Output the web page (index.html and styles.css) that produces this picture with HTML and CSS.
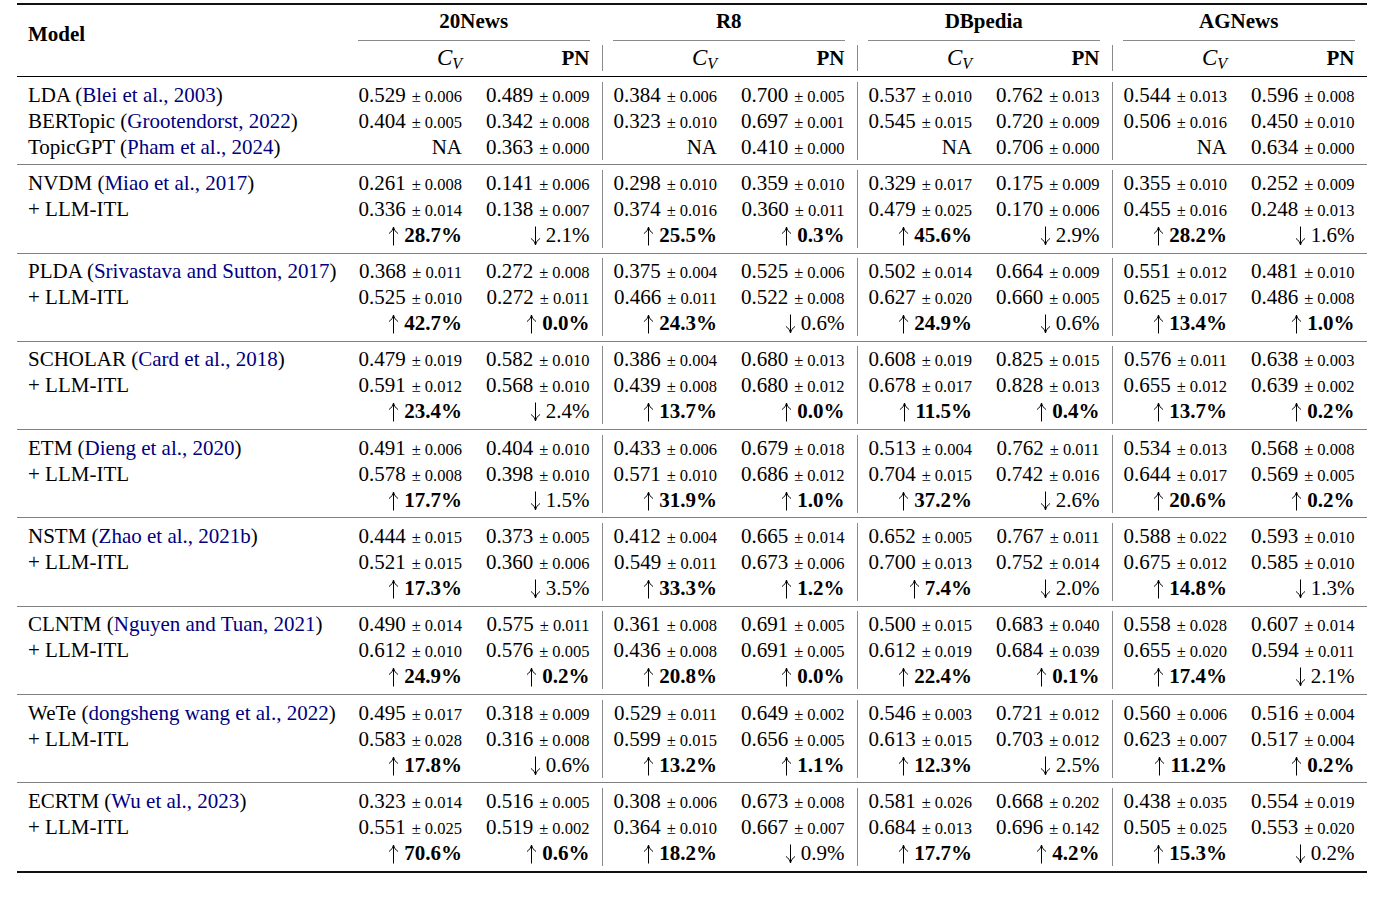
FILE: index.html
```html
<!DOCTYPE html>
<html lang="en">
<head>
<meta charset="utf-8">
<title>Results table</title>
<link rel="stylesheet" href="styles.css">
</head>
<body>
<svg width="0" height="0" class="defs" aria-hidden="true">
  <defs>
    <symbol id="up" viewBox="0 0 11 20"><path d="M5.5 19.5V1.5M1 7.5C3.2 6 4.8 4 5.5 1C6.2 4 7.8 6 10 7.5" fill="none" stroke="#000" stroke-width="1"/></symbol>
    <symbol id="down" viewBox="0 0 11 20"><path d="M5.5 0.5V18.5M1 12.5C3.2 14 4.8 16 5.5 19C6.2 16 7.8 14 10 12.5" fill="none" stroke="#000" stroke-width="1"/></symbol>
  </defs>
</svg>
<div class="table">
  <div class="head">
    <div class="model-h">Model</div>
    <div class="ds">20News</div>
    <div class="ds">R8</div>
    <div class="ds">DBpedia</div>
    <div class="ds">AGNews</div>
    <div class="sub"><i>C</i><sub><i>V</i></sub></div>
    <div class="sub">PN</div>
    <div class="sub s"><i>C</i><sub><i>V</i></sub></div>
    <div class="sub">PN</div>
    <div class="sub s"><i>C</i><sub><i>V</i></sub></div>
    <div class="sub">PN</div>
    <div class="sub s"><i>C</i><sub><i>V</i></sub></div>
    <div class="sub">PN</div>
  </div>

  <div class="group">
    <div class="m">LDA (<a>Blei et al., 2003</a>)</div>
    <div class="c">0.529<small>± 0.006</small></div><div class="c">0.489<small>± 0.009</small></div>
    <div class="c s">0.384<small>± 0.006</small></div><div class="c">0.700<small>± 0.005</small></div>
    <div class="c s">0.537<small>± 0.010</small></div><div class="c">0.762<small>± 0.013</small></div>
    <div class="c s">0.544<small>± 0.013</small></div><div class="c">0.596<small>± 0.008</small></div>
    <div class="m">BERTopic (<a>Grootendorst, 2022</a>)</div>
    <div class="c">0.404<small>± 0.005</small></div><div class="c">0.342<small>± 0.008</small></div>
    <div class="c s">0.323<small>± 0.010</small></div><div class="c">0.697<small>± 0.001</small></div>
    <div class="c s">0.545<small>± 0.015</small></div><div class="c">0.720<small>± 0.009</small></div>
    <div class="c s">0.506<small>± 0.016</small></div><div class="c">0.450<small>± 0.010</small></div>
    <div class="m">TopicGPT (<a>Pham et al., 2024</a>)</div>
    <div class="c">NA</div><div class="c">0.363<small>± 0.000</small></div>
    <div class="c s">NA</div><div class="c">0.410<small>± 0.000</small></div>
    <div class="c s">NA</div><div class="c">0.706<small>± 0.000</small></div>
    <div class="c s">NA</div><div class="c">0.634<small>± 0.000</small></div>
  </div>

  <div class="group">
    <div class="m">NVDM (<a>Miao et al., 2017</a>)</div>
    <div class="c">0.261<small>± 0.008</small></div><div class="c">0.141<small>± 0.006</small></div>
    <div class="c s">0.298<small>± 0.010</small></div><div class="c">0.359<small>± 0.010</small></div>
    <div class="c s">0.329<small>± 0.017</small></div><div class="c">0.175<small>± 0.009</small></div>
    <div class="c s">0.355<small>± 0.010</small></div><div class="c">0.252<small>± 0.009</small></div>
    <div class="m">+ LLM-ITL</div>
    <div class="c">0.336<small>± 0.014</small></div><div class="c">0.138<small>± 0.007</small></div>
    <div class="c s">0.374<small>± 0.016</small></div><div class="c">0.360<small>± 0.011</small></div>
    <div class="c s">0.479<small>± 0.025</small></div><div class="c">0.170<small>± 0.006</small></div>
    <div class="c s">0.455<small>± 0.016</small></div><div class="c">0.248<small>± 0.013</small></div>
    <div class="m"></div>
    <div class="c"><svg class="ar"><use href="#up"/></svg><b>28.7%</b></div><div class="c"><svg class="ar"><use href="#down"/></svg>2.1%</div>
    <div class="c s"><svg class="ar"><use href="#up"/></svg><b>25.5%</b></div><div class="c"><svg class="ar"><use href="#up"/></svg><b>0.3%</b></div>
    <div class="c s"><svg class="ar"><use href="#up"/></svg><b>45.6%</b></div><div class="c"><svg class="ar"><use href="#down"/></svg>2.9%</div>
    <div class="c s"><svg class="ar"><use href="#up"/></svg><b>28.2%</b></div><div class="c"><svg class="ar"><use href="#down"/></svg>1.6%</div>
  </div>

  <div class="group">
    <div class="m">PLDA (<a>Srivastava and Sutton, 2017</a>)</div>
    <div class="c">0.368<small>± 0.011</small></div><div class="c">0.272<small>± 0.008</small></div>
    <div class="c s">0.375<small>± 0.004</small></div><div class="c">0.525<small>± 0.006</small></div>
    <div class="c s">0.502<small>± 0.014</small></div><div class="c">0.664<small>± 0.009</small></div>
    <div class="c s">0.551<small>± 0.012</small></div><div class="c">0.481<small>± 0.010</small></div>
    <div class="m">+ LLM-ITL</div>
    <div class="c">0.525<small>± 0.010</small></div><div class="c">0.272<small>± 0.011</small></div>
    <div class="c s">0.466<small>± 0.011</small></div><div class="c">0.522<small>± 0.008</small></div>
    <div class="c s">0.627<small>± 0.020</small></div><div class="c">0.660<small>± 0.005</small></div>
    <div class="c s">0.625<small>± 0.017</small></div><div class="c">0.486<small>± 0.008</small></div>
    <div class="m"></div>
    <div class="c"><svg class="ar"><use href="#up"/></svg><b>42.7%</b></div><div class="c"><svg class="ar"><use href="#up"/></svg><b>0.0%</b></div>
    <div class="c s"><svg class="ar"><use href="#up"/></svg><b>24.3%</b></div><div class="c"><svg class="ar"><use href="#down"/></svg>0.6%</div>
    <div class="c s"><svg class="ar"><use href="#up"/></svg><b>24.9%</b></div><div class="c"><svg class="ar"><use href="#down"/></svg>0.6%</div>
    <div class="c s"><svg class="ar"><use href="#up"/></svg><b>13.4%</b></div><div class="c"><svg class="ar"><use href="#up"/></svg><b>1.0%</b></div>
  </div>

  <div class="group">
    <div class="m">SCHOLAR (<a>Card et al., 2018</a>)</div>
    <div class="c">0.479<small>± 0.019</small></div><div class="c">0.582<small>± 0.010</small></div>
    <div class="c s">0.386<small>± 0.004</small></div><div class="c">0.680<small>± 0.013</small></div>
    <div class="c s">0.608<small>± 0.019</small></div><div class="c">0.825<small>± 0.015</small></div>
    <div class="c s">0.576<small>± 0.011</small></div><div class="c">0.638<small>± 0.003</small></div>
    <div class="m">+ LLM-ITL</div>
    <div class="c">0.591<small>± 0.012</small></div><div class="c">0.568<small>± 0.010</small></div>
    <div class="c s">0.439<small>± 0.008</small></div><div class="c">0.680<small>± 0.012</small></div>
    <div class="c s">0.678<small>± 0.017</small></div><div class="c">0.828<small>± 0.013</small></div>
    <div class="c s">0.655<small>± 0.012</small></div><div class="c">0.639<small>± 0.002</small></div>
    <div class="m"></div>
    <div class="c"><svg class="ar"><use href="#up"/></svg><b>23.4%</b></div><div class="c"><svg class="ar"><use href="#down"/></svg>2.4%</div>
    <div class="c s"><svg class="ar"><use href="#up"/></svg><b>13.7%</b></div><div class="c"><svg class="ar"><use href="#up"/></svg><b>0.0%</b></div>
    <div class="c s"><svg class="ar"><use href="#up"/></svg><b>11.5%</b></div><div class="c"><svg class="ar"><use href="#up"/></svg><b>0.4%</b></div>
    <div class="c s"><svg class="ar"><use href="#up"/></svg><b>13.7%</b></div><div class="c"><svg class="ar"><use href="#up"/></svg><b>0.2%</b></div>
  </div>

  <div class="group">
    <div class="m">ETM (<a>Dieng et al., 2020</a>)</div>
    <div class="c">0.491<small>± 0.006</small></div><div class="c">0.404<small>± 0.010</small></div>
    <div class="c s">0.433<small>± 0.006</small></div><div class="c">0.679<small>± 0.018</small></div>
    <div class="c s">0.513<small>± 0.004</small></div><div class="c">0.762<small>± 0.011</small></div>
    <div class="c s">0.534<small>± 0.013</small></div><div class="c">0.568<small>± 0.008</small></div>
    <div class="m">+ LLM-ITL</div>
    <div class="c">0.578<small>± 0.008</small></div><div class="c">0.398<small>± 0.010</small></div>
    <div class="c s">0.571<small>± 0.010</small></div><div class="c">0.686<small>± 0.012</small></div>
    <div class="c s">0.704<small>± 0.015</small></div><div class="c">0.742<small>± 0.016</small></div>
    <div class="c s">0.644<small>± 0.017</small></div><div class="c">0.569<small>± 0.005</small></div>
    <div class="m"></div>
    <div class="c"><svg class="ar"><use href="#up"/></svg><b>17.7%</b></div><div class="c"><svg class="ar"><use href="#down"/></svg>1.5%</div>
    <div class="c s"><svg class="ar"><use href="#up"/></svg><b>31.9%</b></div><div class="c"><svg class="ar"><use href="#up"/></svg><b>1.0%</b></div>
    <div class="c s"><svg class="ar"><use href="#up"/></svg><b>37.2%</b></div><div class="c"><svg class="ar"><use href="#down"/></svg>2.6%</div>
    <div class="c s"><svg class="ar"><use href="#up"/></svg><b>20.6%</b></div><div class="c"><svg class="ar"><use href="#up"/></svg><b>0.2%</b></div>
  </div>

  <div class="group">
    <div class="m">NSTM (<a>Zhao et al., 2021b</a>)</div>
    <div class="c">0.444<small>± 0.015</small></div><div class="c">0.373<small>± 0.005</small></div>
    <div class="c s">0.412<small>± 0.004</small></div><div class="c">0.665<small>± 0.014</small></div>
    <div class="c s">0.652<small>± 0.005</small></div><div class="c">0.767<small>± 0.011</small></div>
    <div class="c s">0.588<small>± 0.022</small></div><div class="c">0.593<small>± 0.010</small></div>
    <div class="m">+ LLM-ITL</div>
    <div class="c">0.521<small>± 0.015</small></div><div class="c">0.360<small>± 0.006</small></div>
    <div class="c s">0.549<small>± 0.011</small></div><div class="c">0.673<small>± 0.006</small></div>
    <div class="c s">0.700<small>± 0.013</small></div><div class="c">0.752<small>± 0.014</small></div>
    <div class="c s">0.675<small>± 0.012</small></div><div class="c">0.585<small>± 0.010</small></div>
    <div class="m"></div>
    <div class="c"><svg class="ar"><use href="#up"/></svg><b>17.3%</b></div><div class="c"><svg class="ar"><use href="#down"/></svg>3.5%</div>
    <div class="c s"><svg class="ar"><use href="#up"/></svg><b>33.3%</b></div><div class="c"><svg class="ar"><use href="#up"/></svg><b>1.2%</b></div>
    <div class="c s"><svg class="ar"><use href="#up"/></svg><b>7.4%</b></div><div class="c"><svg class="ar"><use href="#down"/></svg>2.0%</div>
    <div class="c s"><svg class="ar"><use href="#up"/></svg><b>14.8%</b></div><div class="c"><svg class="ar"><use href="#down"/></svg>1.3%</div>
  </div>

  <div class="group">
    <div class="m">CLNTM (<a>Nguyen and Tuan, 2021</a>)</div>
    <div class="c">0.490<small>± 0.014</small></div><div class="c">0.575<small>± 0.011</small></div>
    <div class="c s">0.361<small>± 0.008</small></div><div class="c">0.691<small>± 0.005</small></div>
    <div class="c s">0.500<small>± 0.015</small></div><div class="c">0.683<small>± 0.040</small></div>
    <div class="c s">0.558<small>± 0.028</small></div><div class="c">0.607<small>± 0.014</small></div>
    <div class="m">+ LLM-ITL</div>
    <div class="c">0.612<small>± 0.010</small></div><div class="c">0.576<small>± 0.005</small></div>
    <div class="c s">0.436<small>± 0.008</small></div><div class="c">0.691<small>± 0.005</small></div>
    <div class="c s">0.612<small>± 0.019</small></div><div class="c">0.684<small>± 0.039</small></div>
    <div class="c s">0.655<small>± 0.020</small></div><div class="c">0.594<small>± 0.011</small></div>
    <div class="m"></div>
    <div class="c"><svg class="ar"><use href="#up"/></svg><b>24.9%</b></div><div class="c"><svg class="ar"><use href="#up"/></svg><b>0.2%</b></div>
    <div class="c s"><svg class="ar"><use href="#up"/></svg><b>20.8%</b></div><div class="c"><svg class="ar"><use href="#up"/></svg><b>0.0%</b></div>
    <div class="c s"><svg class="ar"><use href="#up"/></svg><b>22.4%</b></div><div class="c"><svg class="ar"><use href="#up"/></svg><b>0.1%</b></div>
    <div class="c s"><svg class="ar"><use href="#up"/></svg><b>17.4%</b></div><div class="c"><svg class="ar"><use href="#down"/></svg>2.1%</div>
  </div>

  <div class="group">
    <div class="m">WeTe (<a>dongsheng wang et al., 2022</a>)</div>
    <div class="c">0.495<small>± 0.017</small></div><div class="c">0.318<small>± 0.009</small></div>
    <div class="c s">0.529<small>± 0.011</small></div><div class="c">0.649<small>± 0.002</small></div>
    <div class="c s">0.546<small>± 0.003</small></div><div class="c">0.721<small>± 0.012</small></div>
    <div class="c s">0.560<small>± 0.006</small></div><div class="c">0.516<small>± 0.004</small></div>
    <div class="m">+ LLM-ITL</div>
    <div class="c">0.583<small>± 0.028</small></div><div class="c">0.316<small>± 0.008</small></div>
    <div class="c s">0.599<small>± 0.015</small></div><div class="c">0.656<small>± 0.005</small></div>
    <div class="c s">0.613<small>± 0.015</small></div><div class="c">0.703<small>± 0.012</small></div>
    <div class="c s">0.623<small>± 0.007</small></div><div class="c">0.517<small>± 0.004</small></div>
    <div class="m"></div>
    <div class="c"><svg class="ar"><use href="#up"/></svg><b>17.8%</b></div><div class="c"><svg class="ar"><use href="#down"/></svg>0.6%</div>
    <div class="c s"><svg class="ar"><use href="#up"/></svg><b>13.2%</b></div><div class="c"><svg class="ar"><use href="#up"/></svg><b>1.1%</b></div>
    <div class="c s"><svg class="ar"><use href="#up"/></svg><b>12.3%</b></div><div class="c"><svg class="ar"><use href="#down"/></svg>2.5%</div>
    <div class="c s"><svg class="ar"><use href="#up"/></svg><b>11.2%</b></div><div class="c"><svg class="ar"><use href="#up"/></svg><b>0.2%</b></div>
  </div>

  <div class="group">
    <div class="m">ECRTM (<a>Wu et al., 2023</a>)</div>
    <div class="c">0.323<small>± 0.014</small></div><div class="c">0.516<small>± 0.005</small></div>
    <div class="c s">0.308<small>± 0.006</small></div><div class="c">0.673<small>± 0.008</small></div>
    <div class="c s">0.581<small>± 0.026</small></div><div class="c">0.668<small>± 0.202</small></div>
    <div class="c s">0.438<small>± 0.035</small></div><div class="c">0.554<small>± 0.019</small></div>
    <div class="m">+ LLM-ITL</div>
    <div class="c">0.551<small>± 0.025</small></div><div class="c">0.519<small>± 0.002</small></div>
    <div class="c s">0.364<small>± 0.010</small></div><div class="c">0.667<small>± 0.007</small></div>
    <div class="c s">0.684<small>± 0.013</small></div><div class="c">0.696<small>± 0.142</small></div>
    <div class="c s">0.505<small>± 0.025</small></div><div class="c">0.553<small>± 0.020</small></div>
    <div class="m"></div>
    <div class="c"><svg class="ar"><use href="#up"/></svg><b>70.6%</b></div><div class="c"><svg class="ar"><use href="#up"/></svg><b>0.6%</b></div>
    <div class="c s"><svg class="ar"><use href="#up"/></svg><b>18.2%</b></div><div class="c"><svg class="ar"><use href="#down"/></svg>0.9%</div>
    <div class="c s"><svg class="ar"><use href="#up"/></svg><b>17.7%</b></div><div class="c"><svg class="ar"><use href="#up"/></svg><b>4.2%</b></div>
    <div class="c s"><svg class="ar"><use href="#up"/></svg><b>15.3%</b></div><div class="c"><svg class="ar"><use href="#down"/></svg>0.2%</div>
  </div>
</div>
</body>
</html>
```

FILE: styles.css
```css
html, body {
  margin: 0;
  padding: 0;
  background: #fff;
}

body {
  font-family: "Liberation Serif", "Times New Roman", serif;
  font-size: 21px;
  color: #000;
}

.defs {
  position: absolute;
  width: 0;
  height: 0;
  overflow: hidden;
}

.table {
  margin: 3px 0 0 17px;
  width: 1350px;
  border-top: 2px solid #111;
  border-bottom: 2px solid #111;
}

.head {
  display: grid;
  grid-template-columns: 330px repeat(8, 127.5px);
  grid-template-rows: 36px 4px 26px 5px;
  border-bottom: 1px solid #000;
}

.model-h {
  grid-column: 1;
  grid-row: 1 / 5;
  padding: 16px 0 0 11px;
  line-height: 26px;
  font-weight: bold;
}

.ds {
  grid-row: 1;
  margin: 0 12.5px 0 11px;
  line-height: 32px;
  border-bottom: 1px solid #8a8a8a;
  text-align: center;
  font-weight: bold;
}

.head .ds:nth-child(2) { grid-column: 2 / 4; }
.head .ds:nth-child(3) { grid-column: 4 / 6; }
.head .ds:nth-child(4) { grid-column: 6 / 8; }
.head .ds:nth-child(5) { grid-column: 8 / 10; }

.sub {
  grid-row: 3;
  text-align: right;
  padding-right: 12.5px;
  line-height: 26px;
  font-weight: bold;
}

.sub i {
  font-weight: normal;
  font-size: 23px;
}

.sub sub {
  line-height: 0;
  vertical-align: -4px;
}

.sub sub i {
  font-size: 16px;
}

.group {
  display: grid;
  grid-template-columns: 330px repeat(8, 127.5px);
  grid-auto-rows: 26px;
  padding: 4.65px 0;
  line-height: 26px;
}

.group + .group {
  border-top: 1px solid #808080;
}

.m {
  padding-left: 11px;
  white-space: nowrap;
}

.m a {
  color: #000080;
  text-decoration: none;
}

.c {
  text-align: right;
  padding-right: 12.5px;
  white-space: nowrap;
}

.s {
  border-left: 1px solid #8a8a8a;
}

.c small {
  font-size: 16.5px;
  margin-left: 6px;
}

.ar {
  width: 11px;
  height: 20px;
  vertical-align: -4px;
  margin-right: 5px;
}
```
